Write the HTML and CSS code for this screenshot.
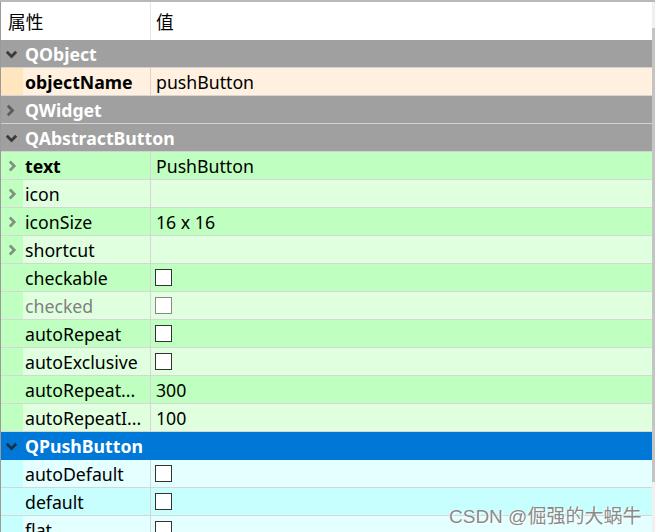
FILE: index.html
```html
<!DOCTYPE html>
<html lang="zh">
<head>
<meta charset="utf-8">
<title>属性编辑器</title>
<link rel="stylesheet" href="styles.css">
</head>
<body>
<div class="window">
  <div class="tree">
    <div class="header">
      <div class="hname">属性</div>
      <div class="hval">值</div>
    </div>

    <div class="group gray"><span class="chev"><svg viewBox="0 0 13 9" width="13" height="9"><polyline points="1.8,1.8 6.5,6.5 11.2,1.8"/></svg></span>QObject</div>
    <div class="row orange alt"><div class="indent"></div><div class="name bold">objectName</div><div class="val">pushButton</div></div>

    <div class="group gray"><span class="chev closed"><svg viewBox="0 0 9 13" width="9" height="13"><polyline points="1.8,1.8 6.5,6.5 1.8,11.2"/></svg></span>QWidget</div>

    <div class="group gray"><span class="chev"><svg viewBox="0 0 13 9" width="13" height="9"><polyline points="1.8,1.8 6.5,6.5 11.2,1.8"/></svg></span>QAbstractButton</div>
    <div class="row green"><div class="indent"><span class="pchev"><svg viewBox="0 0 9 12" width="9" height="12"><polyline points="1.8,1.5 6.3,6 1.8,10.5"/></svg></span></div><div class="name bold">text</div><div class="val">PushButton</div></div>
    <div class="row green alt"><div class="indent"><span class="pchev"><svg viewBox="0 0 9 12" width="9" height="12"><polyline points="1.8,1.5 6.3,6 1.8,10.5"/></svg></span></div><div class="name">icon</div><div class="val"></div></div>
    <div class="row green"><div class="indent"><span class="pchev"><svg viewBox="0 0 9 12" width="9" height="12"><polyline points="1.8,1.5 6.3,6 1.8,10.5"/></svg></span></div><div class="name">iconSize</div><div class="val">16 x 16</div></div>
    <div class="row green alt"><div class="indent"><span class="pchev"><svg viewBox="0 0 9 12" width="9" height="12"><polyline points="1.8,1.5 6.3,6 1.8,10.5"/></svg></span></div><div class="name">shortcut</div><div class="val"></div></div>
    <div class="row green"><div class="indent"></div><div class="name">checkable</div><div class="val"><span class="check"></span></div></div>
    <div class="row green alt disabled"><div class="indent"></div><div class="name">checked</div><div class="val"><span class="check"></span></div></div>
    <div class="row green"><div class="indent"></div><div class="name">autoRepeat</div><div class="val"><span class="check"></span></div></div>
    <div class="row green alt"><div class="indent"></div><div class="name">autoExclusive</div><div class="val"><span class="check"></span></div></div>
    <div class="row green"><div class="indent"></div><div class="name">autoRepeat...</div><div class="val">300</div></div>
    <div class="row green alt"><div class="indent"></div><div class="name">autoRepeatI...</div><div class="val">100</div></div>

    <div class="group selected"><span class="chev"><svg viewBox="0 0 13 9" width="13" height="9"><polyline points="1.8,1.8 6.5,6.5 11.2,1.8"/></svg></span>QPushButton</div>
    <div class="row cyan alt"><div class="indent"></div><div class="name">autoDefault</div><div class="val"><span class="check"></span></div></div>
    <div class="row cyan"><div class="indent"></div><div class="name">default</div><div class="val"><span class="check"></span></div></div>
    <div class="row cyan alt"><div class="indent"></div><div class="name">flat</div><div class="val"><span class="check"></span></div></div>
  </div>
  <div class="scrollbar"><div class="thumb"></div></div>
  <div class="watermark">CSDN @倔强的大蜗牛</div>
</div>
</body>
</html>
```

FILE: styles.css
```css
html, body {
  margin: 0;
  padding: 0;
  background: #ffffff;
}

body {
  font-family: "Noto Sans", "Noto Sans CJK SC", sans-serif;
  font-size: 17.7px;
  color: #000000;
  width: 655px;
  height: 532px;
  overflow: hidden;
}

.window {
  position: relative;
  display: flex;
  width: 655px;
  height: 532px;
  overflow: hidden;
  border-top: 2px solid #b9b9b9;
  box-sizing: border-box;
}

.tree {
  width: 652px;
  flex: none;
  border-left: 1px solid #9a9a9a;
  box-sizing: border-box;
}

.header {
  display: flex;
  height: 38px;
  align-items: center;
  background: #ffffff;
}

.hname {
  width: 150px;
  box-sizing: border-box;
  padding-left: 7px;
  height: 100%;
  display: flex;
  align-items: center;
  border-right: 1px solid #e5e5e5;
  font-family: "Noto Sans CJK SC", sans-serif;
}

.hval {
  padding-left: 5px;
  font-family: "Noto Sans CJK SC", sans-serif;
}

.group {
  display: flex;
  align-items: center;
  height: 28px;
  box-sizing: border-box;
  border-bottom: 1px solid #d2d2d2;
  color: #ffffff;
  font-weight: bold;
  padding-top: 1px;
}

.group.gray {
  background: #a0a0a0;
}

.group.selected {
  background: #0078d7;
  border-bottom-color: #0078d7;
}

.chev {
  width: 24px;
  flex: none;
  display: flex;
  align-items: center;
  padding-left: 4px;
  box-sizing: border-box;
}

.chev svg {
  display: block;
}

.chev svg polyline {
  fill: none;
  stroke: #3a3a3a;
  stroke-width: 2.8;
}

.chev.closed {
  padding-left: 5px;
}

.chev.closed svg polyline {
  stroke: #5c5c5c;
}

.group.selected .chev svg polyline {
  stroke: #18304a;
}

.row {
  display: flex;
  height: 28px;
  box-sizing: border-box;
  border-bottom: 1px solid #d6d6d6;
  padding-top: 1px;
}

.indent {
  width: 22px;
  flex: none;
  display: flex;
  align-items: center;
  padding-left: 7px;
  box-sizing: border-box;
  margin-top: -1px;
}

.pchev svg {
  display: block;
}

.pchev svg polyline {
  fill: none;
  stroke: #7f907f;
  stroke-width: 2.6;
}

.name {
  width: 128px;
  flex: none;
  box-sizing: border-box;
  padding-left: 2px;
  display: flex;
  align-items: center;
  border-right: 1px solid #d6d6d6;
  white-space: nowrap;
  overflow: hidden;
  margin-top: -1px;
  padding-top: 1px;
}

.bold {
  font-weight: bold;
}

.val {
  flex: 1;
  padding-left: 5px;
  display: flex;
  align-items: center;
  white-space: nowrap;
}

.check {
  width: 17px;
  height: 17px;
  box-sizing: border-box;
  border: 1px solid #333333;
  background: #ffffff;
  margin-left: -1px;
  margin-top: -1px;
}

.disabled .name {
  color: #808080;
}

.disabled .check {
  border-color: #888888;
}

.orange { background: #fff0df; }
.orange .indent { background: #ffe6bf; }

.green { background: #bfffbf; }
.green.alt { background: #dfffdf; }
.green .indent { background: #bfffbf; }

.cyan { background: #c7ffff; }
.cyan.alt { background: #e3ffff; }
.cyan .indent { background: #c7ffff; }

.scrollbar {
  width: 3px;
  flex: none;
  background: #f0f0f0;
  padding-top: 26px;
}

.thumb {
  height: 454px;
  background: #c4c4c4;
}

.watermark {
  position: absolute;
  left: 449px;
  top: 499px;
  font-family: "Liberation Sans", "Noto Sans CJK SC", sans-serif;
  font-size: 19px;
  color: #8a8a8a;
  text-shadow: 1px 1px 0 #ffffff, -1px 0 0 rgba(255,255,255,0.7);
  white-space: nowrap;
}
```
